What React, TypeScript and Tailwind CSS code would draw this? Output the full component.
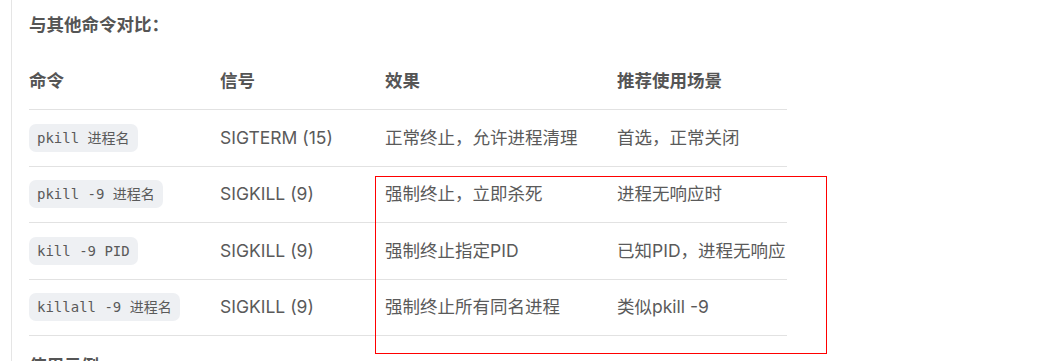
import React from "react";

const rows = [
  { cmd: "pkill 进程名", sig: "SIGTERM (15)", effect: "正常终止，允许进程清理", use: "首选，正常关闭" },
  { cmd: "pkill -9 进程名", sig: "SIGKILL (9)", effect: "强制终止，立即杀死", use: "进程无响应时" },
  { cmd: "kill -9 PID", sig: "SIGKILL (9)", effect: "强制终止指定PID", use: "已知PID，进程无响应" },
  { cmd: "killall -9 进程名", sig: "SIGKILL (9)", effect: "强制终止所有同名进程", use: "类似pkill -9" },
];

const sans = "font-['Inter','Noto_Sans_CJK_SC',sans-serif]";

export default function App() {
  return (
    <div className={`relative h-[361px] w-[1063px] overflow-hidden bg-white ${sans}`}>
      <div className="ml-[11px] h-full border-l border-[#e5e5e5] pl-[17px] pt-[13px]">
        <h3 className="h-[24px] text-[17.5px] font-bold leading-[24px] text-[#555]">与其他命令对比：</h3>
        <div className="mt-[17px] w-[758px]">
          <div className="grid h-[56px] grid-cols-[191px_165px_232px_170px] items-center border-b border-[#e2e2e2] text-[17.5px] font-bold text-[#555]">
            <div>命令</div>
            <div>信号</div>
            <div>效果</div>
            <div>推荐使用场景</div>
          </div>
          {rows.map((r) => (
            <div
              key={r.cmd}
              className="grid h-[56.5px] grid-cols-[191px_165px_232px_170px] items-center border-b border-[#e2e2e2] text-[17.5px] text-[#5a5a5a]"
            >
              <div>
                <span className="inline-block rounded-[7px] bg-[#eef0f3] px-[8px] py-[4px] font-['DejaVu_Sans_Mono','Noto_Sans_CJK_SC',monospace] text-[14px] leading-[20px] text-[#5a5a5a]">
                  {r.cmd}
                </span>
              </div>
              <div>{r.sig}</div>
              <div>{r.effect}</div>
              <div className="whitespace-nowrap">{r.use}</div>
            </div>
          ))}
          <h3 className="mt-[18px] text-[17.5px] font-bold leading-[24px] text-[#555]">使用示例</h3>
        </div>
      </div>
      <div className="absolute left-[375px] top-[176px] h-[178px] w-[452px] border border-[#ff0000]" />
    </div>
  );
}
